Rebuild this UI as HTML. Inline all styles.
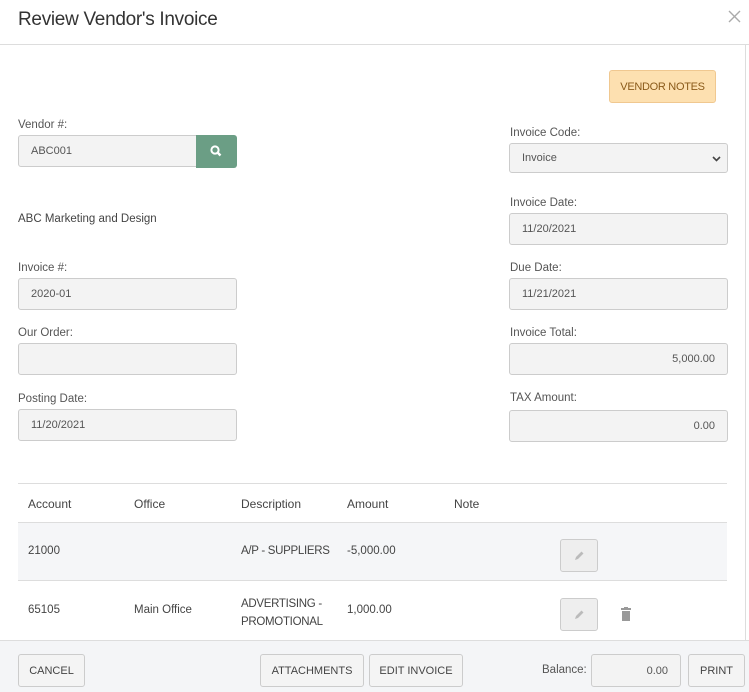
<!DOCTYPE html>
<html><head><style>
*{box-sizing:border-box;margin:0;padding:0}
body{width:749px;height:692px;overflow:hidden;background:#fff;font-family:"Liberation Sans",sans-serif;color:#333;position:relative}
.a{position:absolute}
.lbl{position:absolute;font-size:11.5px;color:#555}
.in{position:absolute;background:#f3f3f3;border:1px solid #ccc;border-radius:3px;font-size:11px;color:#555;padding:0 12px;display:flex;align-items:center;height:32px}
.btn{position:absolute;border:1px solid #ccc;border-radius:3px;background:#f4f4f4;font-size:11px;color:#444;display:flex;align-items:center;justify-content:center}
.t{position:absolute;font-size:12px;color:#444}
</style></head><body>
<div class="a" style="left:18px;top:9px;font-size:19px;color:#333;letter-spacing:-0.3px">Review Vendor's Invoice</div>
<svg class="a" style="left:728px;top:10px" width="13" height="13"><path d="M1 1L12 12M12 1L1 12" stroke="#aaa" stroke-width="1.4"/></svg>
<div class="a" style="left:0;top:44px;width:749px;height:1px;background:#ddd"></div>
<div class="a" style="left:745px;top:45px;width:1px;height:595px;background:#ddd"></div>

<div class="btn" style="left:609px;top:70px;width:107px;height:33px;background:#fde0b0;border-color:#f0c890;color:#8a5a1a;letter-spacing:-0.3px">VENDOR NOTES</div>

<div class="lbl" style="left:18px;top:119px">Vendor #:</div>
<div class="in" style="left:18px;top:135px;width:180px;border-radius:3px 0 0 3px">ABC001</div>
<div class="a" style="left:196px;top:135px;width:41px;height:33px;background:#6b9e85;border-radius:0 3px 3px 0">
<svg width="41" height="33"><circle cx="19" cy="15" r="3.6" fill="none" stroke="#fff" stroke-width="2"/><line x1="21.5" y1="17.5" x2="24.5" y2="20.5" stroke="#fff" stroke-width="2.4"/></svg></div>

<div class="t" style="left:18px;top:213px;font-size:11.5px">ABC Marketing and Design</div>

<div class="lbl" style="left:18px;top:262px">Invoice #:</div>
<div class="in" style="left:18px;top:278px;width:219px">2020-01</div>
<div class="lbl" style="left:18px;top:327px">Our Order:</div>
<div class="in" style="left:18px;top:343px;width:219px"></div>
<div class="lbl" style="left:18px;top:393px">Posting Date:</div>
<div class="in" style="left:18px;top:409px;width:219px">11/20/2021</div>

<div class="lbl" style="left:510px;top:127px">Invoice Code:</div>
<div class="in" style="left:509px;top:143px;width:219px;height:30px">Invoice<svg style="position:absolute;right:6px;top:12px" width="9" height="6"><path d="M1 1L4.5 4.5L8 1" fill="none" stroke="#444" stroke-width="1.6"/></svg></div>
<div class="lbl" style="left:510px;top:197px">Invoice Date:</div>
<div class="in" style="left:509px;top:213px;width:219px">11/20/2021</div>
<div class="lbl" style="left:510px;top:262px">Due Date:</div>
<div class="in" style="left:509px;top:278px;width:219px">11/21/2021</div>
<div class="lbl" style="left:510px;top:327px">Invoice Total:</div>
<div class="in" style="left:509px;top:343px;width:219px;justify-content:flex-end">5,000.00</div>
<div class="lbl" style="left:510px;top:392px">TAX Amount:</div>
<div class="in" style="left:509px;top:410px;width:219px;justify-content:flex-end">0.00</div>

<div class="a" style="left:18px;top:483px;width:709px;height:1px;background:#ddd"></div>
<div class="t" style="left:28px;top:497px">Account</div>
<div class="t" style="left:134px;top:497px">Office</div>
<div class="t" style="left:241px;top:497px">Description</div>
<div class="t" style="left:347px;top:497px">Amount</div>
<div class="t" style="left:454px;top:497px">Note</div>
<div class="a" style="left:18px;top:522px;width:709px;height:59px;background:#f5f6f8;border-top:1px solid #ddd;border-bottom:1px solid #ddd"></div>
<div class="t" style="left:28px;top:545px;font-size:11.5px">21000</div>
<div class="t" style="left:241px;top:545px;font-size:11.5px;letter-spacing:-0.3px">A/P - SUPPLIERS</div>
<div class="t" style="left:347px;top:545px;font-size:11.5px">-5,000.00</div>
<div class="btn" style="left:560px;top:539px;width:38px;height:33px;background:#eee"><svg width="12" height="12"><path d="M2 10L3 7L8.5 1.5L10.5 3.5L5 9Z" fill="#bbb"/></svg></div>
<div class="t" style="left:28px;top:604px;font-size:11.5px">65105</div>
<div class="t" style="left:134px;top:604px;font-size:11.5px">Main Office</div>
<div class="t" style="left:241px;top:595px;font-size:11.5px;line-height:18px;letter-spacing:-0.3px">ADVERTISING -<br>PROMOTIONAL</div>
<div class="t" style="left:347px;top:604px;font-size:11.5px">1,000.00</div>
<div class="btn" style="left:560px;top:598px;width:38px;height:33px;background:#eee"><svg width="12" height="12"><path d="M2 10L3 7L8.5 1.5L10.5 3.5L5 9Z" fill="#bbb"/></svg></div>
<svg class="a" style="left:621px;top:607px" width="10" height="14"><rect x="0" y="1" width="10" height="2" fill="#999"/><rect x="3" y="0" width="4" height="2" fill="#999"/><rect x="1" y="4" width="8" height="10" fill="#999"/></svg>

<div class="a" style="left:0;top:640px;width:749px;height:52px;background:#f4f5f7;border-top:1px solid #ddd"></div>
<div class="btn" style="left:18px;top:654px;width:67px;height:33px">CANCEL</div>
<div class="btn" style="left:260px;top:654px;width:104px;height:33px">ATTACHMENTS</div>
<div class="btn" style="left:369px;top:654px;width:94px;height:33px">EDIT INVOICE</div>
<div class="lbl" style="left:542px;top:664px">Balance:</div>
<div class="in" style="left:591px;top:654px;width:90px;height:33px;justify-content:flex-end">0.00</div>
<div class="btn" style="left:688px;top:654px;width:57px;height:33px">PRINT</div>
</body></html>
